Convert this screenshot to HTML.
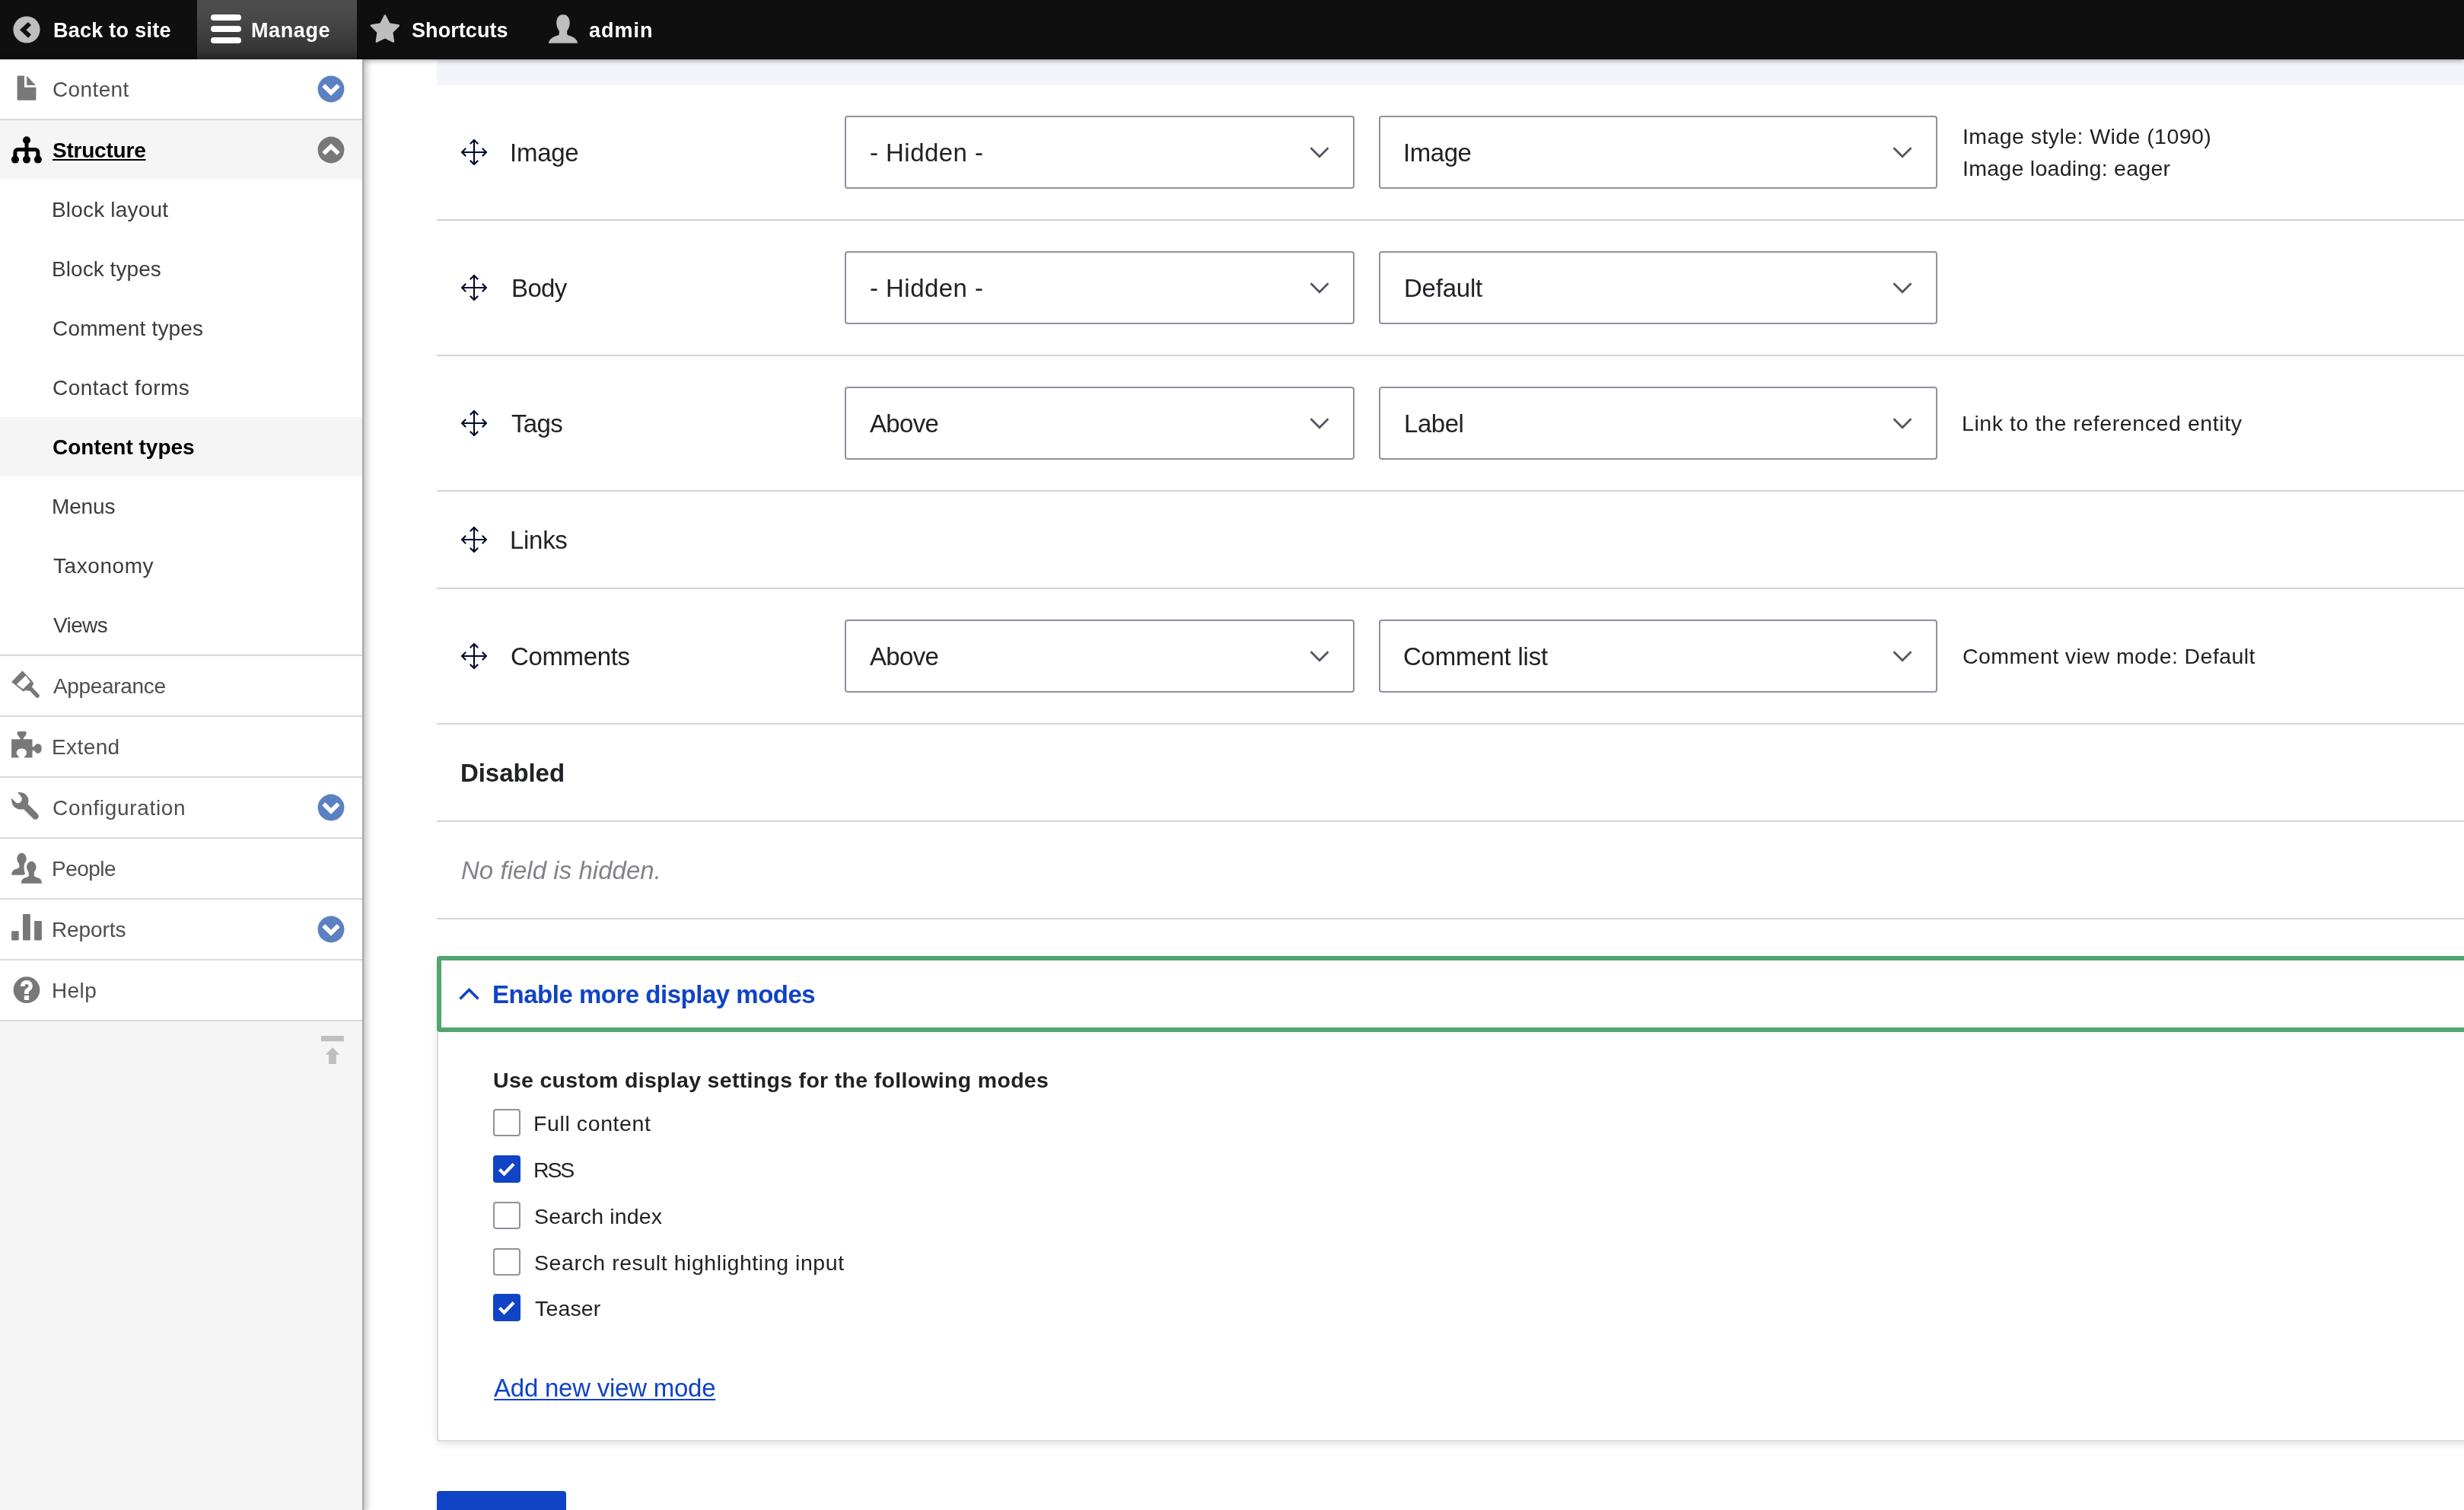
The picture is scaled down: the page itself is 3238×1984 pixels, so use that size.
<!DOCTYPE html><html><head><meta charset="utf-8"><title>Manage display</title><style>
*{margin:0;padding:0;box-sizing:border-box}
html,body{width:3238px;height:1984px;overflow:hidden;background:#fff;font-family:"Liberation Sans",sans-serif}
.t{position:absolute;line-height:1;white-space:nowrap;will-change:transform}
.a{position:absolute}
svg{position:absolute;overflow:visible}
.tb{background:#0f0f0f;left:0;top:0;width:3238px;height:78px;position:absolute;box-shadow:-2px 0 6px 2px rgba(0,0,0,.3333);z-index:5}
.tbt{color:#fff;font-weight:700}
.side{position:absolute;left:0;top:78px;width:478px;height:1906px;background:#fff;border-right:2px solid #a8a8a8;box-shadow:-2px 0 10px 4px rgba(0,0,0,.3333);z-index:6}
.sb{position:absolute;left:0;width:476px;height:2px;background:#d9d9d9}
.st{color:#4e4e4e}
.ss{color:#3c3c3c}
.main{position:absolute;left:0;top:0}
.rb{position:absolute;left:574px;width:2664px;height:2px;background:#d3d4d9}
.fl{color:#212227}
.sel{position:absolute;height:96px;border:2px solid #8e929c;border-radius:4px;background:#fff}
.cb{position:absolute;width:36px;height:36px;border:2px solid #8e929c;border-radius:4px;background:#fff}
.cbc{background:#1043c6;border-color:#1043c6}
</style></head><body>
<div class="a" style="left:574px;top:78px;width:2664px;height:34px;background:#f3f4f9"></div>
<div class="rb" style="top:288px"></div>
<svg style="left:603px;top:180.0px" width="40" height="40" viewBox="-20 -20 40 40"><g fill="none" stroke="#030d2e" stroke-width="2.2" stroke-linecap="round" stroke-linejoin="round"><path d="M0 -15.9V15.9M-15.9 0H15.9"/><path d="M-4.6 -11.5L0 -15.9L4.6 -11.5M-4.6 11.5L0 15.9L4.6 11.5M-11.5 -4.6L-15.9 0L-11.5 4.6M11.5 -4.6L15.9 0L11.5 4.6"/></g></svg>
<div class="t fl" style="left:670.25px;top:184.07px;font-size:33px;;letter-spacing:-0.260px">Image</div>
<div class="sel" style="left:1110px;top:152.0px;width:670px"></div>
<div class="t fl" style="left:1142.70px;top:184.07px;font-size:33px;;letter-spacing:0.458px">- Hidden -</div>
<svg style="left:1720px;top:186.0px" width="28" height="28" viewBox="-14 -14 28 28"><path d="M-11.5 -5.8L0 5.7L11.5 -5.8" fill="none" stroke="#545560" stroke-width="2.8"/></svg>
<div class="sel" style="left:1812px;top:152.0px;width:734px"></div>
<div class="t fl" style="left:1843.60px;top:184.07px;font-size:33px;;letter-spacing:-0.450px">Image</div>
<svg style="left:2486px;top:186.0px" width="28" height="28" viewBox="-14 -14 28 28"><path d="M-11.5 -5.8L0 5.7L11.5 -5.8" fill="none" stroke="#545560" stroke-width="2.8"/></svg>
<div class="t fl" style="left:2578.70px;top:164.87px;font-size:28.5px;;letter-spacing:0.432px">Image style: Wide (1090)</div>
<div class="t fl" style="left:2578.70px;top:206.87px;font-size:28.5px;;letter-spacing:0.280px">Image loading: eager</div>
<div class="rb" style="top:466px"></div>
<svg style="left:603px;top:358.0px" width="40" height="40" viewBox="-20 -20 40 40"><g fill="none" stroke="#030d2e" stroke-width="2.2" stroke-linecap="round" stroke-linejoin="round"><path d="M0 -15.9V15.9M-15.9 0H15.9"/><path d="M-4.6 -11.5L0 -15.9L4.6 -11.5M-4.6 11.5L0 15.9L4.6 11.5M-11.5 -4.6L-15.9 0L-11.5 4.6M11.5 -4.6L15.9 0L11.5 4.6"/></g></svg>
<div class="t fl" style="left:671.90px;top:362.07px;font-size:33px;;letter-spacing:-0.634px">Body</div>
<div class="sel" style="left:1110px;top:330.0px;width:670px"></div>
<div class="t fl" style="left:1142.70px;top:362.07px;font-size:33px;;letter-spacing:0.458px">- Hidden -</div>
<svg style="left:1720px;top:364.0px" width="28" height="28" viewBox="-14 -14 28 28"><path d="M-11.5 -5.8L0 5.7L11.5 -5.8" fill="none" stroke="#545560" stroke-width="2.8"/></svg>
<div class="sel" style="left:1812px;top:330.0px;width:734px"></div>
<div class="t fl" style="left:1844.60px;top:362.07px;font-size:33px;;letter-spacing:-0.217px">Default</div>
<svg style="left:2486px;top:364.0px" width="28" height="28" viewBox="-14 -14 28 28"><path d="M-11.5 -5.8L0 5.7L11.5 -5.8" fill="none" stroke="#545560" stroke-width="2.8"/></svg>
<div class="rb" style="top:644px"></div>
<svg style="left:603px;top:536.0px" width="40" height="40" viewBox="-20 -20 40 40"><g fill="none" stroke="#030d2e" stroke-width="2.2" stroke-linecap="round" stroke-linejoin="round"><path d="M0 -15.9V15.9M-15.9 0H15.9"/><path d="M-4.6 -11.5L0 -15.9L4.6 -11.5M-4.6 11.5L0 15.9L4.6 11.5M-11.5 -4.6L-15.9 0L-11.5 4.6M11.5 -4.6L15.9 0L11.5 4.6"/></g></svg>
<div class="t fl" style="left:672.40px;top:540.07px;font-size:33px;;letter-spacing:-0.664px">Tags</div>
<div class="sel" style="left:1110px;top:508.0px;width:670px"></div>
<div class="t fl" style="left:1143.20px;top:540.07px;font-size:33px;;letter-spacing:-0.650px">Above</div>
<svg style="left:1720px;top:542.0px" width="28" height="28" viewBox="-14 -14 28 28"><path d="M-11.5 -5.8L0 5.7L11.5 -5.8" fill="none" stroke="#545560" stroke-width="2.8"/></svg>
<div class="sel" style="left:1812px;top:508.0px;width:734px"></div>
<div class="t fl" style="left:1844.60px;top:540.07px;font-size:33px;;letter-spacing:-0.450px">Label</div>
<svg style="left:2486px;top:542.0px" width="28" height="28" viewBox="-14 -14 28 28"><path d="M-11.5 -5.8L0 5.7L11.5 -5.8" fill="none" stroke="#545560" stroke-width="2.8"/></svg>
<div class="t fl" style="left:2577.90px;top:541.87px;font-size:28.5px;;letter-spacing:0.579px">Link to the referenced entity</div>
<div class="rb" style="top:772px"></div>
<svg style="left:603px;top:689.0px" width="40" height="40" viewBox="-20 -20 40 40"><g fill="none" stroke="#030d2e" stroke-width="2.2" stroke-linecap="round" stroke-linejoin="round"><path d="M0 -15.9V15.9M-15.9 0H15.9"/><path d="M-4.6 -11.5L0 -15.9L4.6 -11.5M-4.6 11.5L0 15.9L4.6 11.5M-11.5 -4.6L-15.9 0L-11.5 4.6M11.5 -4.6L15.9 0L11.5 4.6"/></g></svg>
<div class="t fl" style="left:670.40px;top:693.07px;font-size:33px;;letter-spacing:-0.300px">Links</div>
<div class="rb" style="top:950px"></div>
<svg style="left:603px;top:842.0px" width="40" height="40" viewBox="-20 -20 40 40"><g fill="none" stroke="#030d2e" stroke-width="2.2" stroke-linecap="round" stroke-linejoin="round"><path d="M0 -15.9V15.9M-15.9 0H15.9"/><path d="M-4.6 -11.5L0 -15.9L4.6 -11.5M-4.6 11.5L0 15.9L4.6 11.5M-11.5 -4.6L-15.9 0L-11.5 4.6M11.5 -4.6L15.9 0L11.5 4.6"/></g></svg>
<div class="t fl" style="left:671.40px;top:846.07px;font-size:33px;;letter-spacing:-0.356px">Comments</div>
<div class="sel" style="left:1110px;top:814.0px;width:670px"></div>
<div class="t fl" style="left:1143.20px;top:846.07px;font-size:33px;;letter-spacing:-0.650px">Above</div>
<svg style="left:1720px;top:848.0px" width="28" height="28" viewBox="-14 -14 28 28"><path d="M-11.5 -5.8L0 5.7L11.5 -5.8" fill="none" stroke="#545560" stroke-width="2.8"/></svg>
<div class="sel" style="left:1812px;top:814.0px;width:734px"></div>
<div class="t fl" style="left:1844.40px;top:846.07px;font-size:33px;;letter-spacing:-0.215px">Comment list</div>
<svg style="left:2486px;top:848.0px" width="28" height="28" viewBox="-14 -14 28 28"><path d="M-11.5 -5.8L0 5.7L11.5 -5.8" fill="none" stroke="#545560" stroke-width="2.8"/></svg>
<div class="t fl" style="left:2579.00px;top:847.87px;font-size:28.5px;;letter-spacing:0.426px">Comment view mode: Default</div>
<div class="t fl" style="left:605.00px;top:999.07px;font-size:33px;font-weight:700;letter-spacing:-0.071px">Disabled</div>
<div class="rb" style="top:1078px"></div>
<div class="t " style="left:606.00px;top:1127.07px;font-size:33px;font-style:italic;color:#82828c;letter-spacing:0.028px">No field is hidden.</div>
<div class="rb" style="top:1206px"></div>
<div class="a" style="left:574px;top:1256px;width:2700px;height:638px;background:#fff;border:2px solid #dcdce2;border-radius:4px;box-shadow:0 4px 10px rgba(0,0,0,.1)"></div>
<div class="a" style="left:574px;top:1256px;width:2700px;height:100px;border:6px solid #52a570;border-radius:4px"></div>
<svg style="left:600px;top:1292px" width="34" height="28" viewBox="0 0 34 28"><path d="M4.5 20.5L16.5 8.5L28.5 20.5" fill="none" stroke="#1043c6" stroke-width="3.6"/></svg>
<div class="t " style="left:647.25px;top:1290.07px;font-size:33px;font-weight:700;color:#1043c6;letter-spacing:-0.491px">Enable more display modes</div>
<div class="t fl" style="left:648.00px;top:1405.37px;font-size:28.5px;font-weight:700;letter-spacing:0.314px">Use custom display settings for the following modes</div>
<div class="cb" style="left:648px;top:1457px"></div>
<div class="t fl" style="left:701.00px;top:1462.37px;font-size:28.5px;;letter-spacing:0.600px">Full content</div>
<div class="cb cbc" style="left:648px;top:1518px"></div><svg style="left:648px;top:1518px" width="36" height="36" viewBox="0 0 36 36"><path d="M8.5 18.5L14.5 24.5L27 11.5" fill="none" stroke="#fff" stroke-width="4.2"/></svg>
<div class="t fl" style="left:701.00px;top:1523.37px;font-size:28.5px;;letter-spacing:-2.150px">RSS</div>
<div class="cb" style="left:648px;top:1579px"></div>
<div class="t fl" style="left:702.00px;top:1584.37px;font-size:28.5px;;letter-spacing:0.145px">Search index</div>
<div class="cb" style="left:648px;top:1640px"></div>
<div class="t fl" style="left:702.00px;top:1645.37px;font-size:28.5px;;letter-spacing:0.559px">Search result highlighting input</div>
<div class="cb cbc" style="left:648px;top:1700px"></div><svg style="left:648px;top:1700px" width="36" height="36" viewBox="0 0 36 36"><path d="M8.5 18.5L14.5 24.5L27 11.5" fill="none" stroke="#fff" stroke-width="4.2"/></svg>
<div class="t fl" style="left:703.00px;top:1705.37px;font-size:28.5px;;letter-spacing:0.150px">Teaser</div>
<div class="t " style="left:648.75px;top:1807.07px;font-size:33px;color:#1043c6;text-decoration:underline;text-decoration-thickness:2px;text-underline-offset:3px;;letter-spacing:-0.238px">Add new view mode</div>
<div class="a" style="left:574px;top:1959px;width:170px;height:60px;background:#1043c6;border-radius:4px"></div>
<div class="tb">
<div class="a" style="left:259px;top:0;width:210px;height:78px;background:linear-gradient(rgba(255,255,255,.25) 20%,rgba(255,255,255,0) 200%)"></div>
<svg style="left:17px;top:21px" width="36" height="36" viewBox="0 0 36 36"><circle cx="18" cy="18" r="17.6" fill="#bebebe"/><path d="M22 10L13.2 18.3L22 26.6" fill="none" stroke="#0f0f0f" stroke-width="5.8"/></svg>
<div class="t tbt" style="left:70.10px;top:27.14px;font-size:27px;;letter-spacing:0.263px">Back to site</div>
<div class="a" style="left:277px;top:19px;width:40px;height:8px;border-radius:4px;background:#fff"></div>
<div class="a" style="left:277px;top:34px;width:40px;height:8px;border-radius:4px;background:#fff"></div>
<div class="a" style="left:277px;top:49px;width:40px;height:8px;border-radius:4px;background:#fff"></div>
<div class="t tbt" style="left:330.40px;top:27.14px;font-size:27px;;letter-spacing:0.620px">Manage</div>
<svg style="left:0;top:0" width="3238" height="78" viewBox="0 0 3238 78"><polygon points="505.90,20.60 511.60,31.55 523.78,33.59 515.13,42.40 516.95,54.61 505.90,49.10 494.85,54.61 496.67,42.40 488.02,33.59 500.20,31.55" fill="#bebebe" stroke="#bebebe" stroke-width="2.5" stroke-linejoin="round"/><path d="M740 19c-5 0-8.8 4.4-8.8 10.8 0 4.6 1.8 8.4 3.6 10.8v3.6c0 1.2-0.8 2-2 2.4-5 1.6-9 3.4-11 7.2-0.5 1-0.8 1.9-0.9 2.9h38.2c-0.1-1-0.4-1.9-0.9-2.9-2-3.8-6-5.6-11-7.2-1.2-0.4-2-1.2-2-2.4v-3.6c1.8-2.4 3.6-6.2 3.6-10.8 0-6.4-3.8-10.8-8.8-10.8z" fill="#bebebe"/></svg>
<div class="t tbt" style="left:540.50px;top:27.14px;font-size:27px;;letter-spacing:0.062px">Shortcuts</div>
<div class="t tbt" style="left:773.50px;top:27.14px;font-size:27px;;letter-spacing:0.975px">admin</div>
</div>
<div class="side">
<div class="a" style="left:0;top:80px;width:476px;height:78px;background:#f5f5f5"></div>
<div class="a" style="left:0;top:470px;width:476px;height:78px;background:#f5f5f5"></div>
<div class="a" style="left:0;top:1264px;width:476px;height:700px;background:#f5f5f5"></div>
<div class="sb" style="top:78px"></div>
<div class="sb" style="top:782px"></div>
<div class="sb" style="top:862px"></div>
<div class="sb" style="top:942px"></div>
<div class="sb" style="top:1022px"></div>
<div class="sb" style="top:1102px"></div>
<div class="sb" style="top:1182px"></div>
<div class="sb" style="top:1262px"></div>
<div class="t st" style="left:69.00px;top:25.80px;font-size:28px;;letter-spacing:0.377px">Content</div>
<div class="t " style="left:69.00px;top:105.80px;font-size:28px;font-weight:700;color:#000;text-decoration:underline;text-decoration-thickness:2px;text-underline-offset:2px;letter-spacing:-0.221px">Structure</div>
<div class="t ss" style="left:67.80px;top:183.90px;font-size:28px;;letter-spacing:0.182px">Block layout</div>
<div class="t ss" style="left:67.80px;top:261.90px;font-size:28px;;letter-spacing:0.060px">Block types</div>
<div class="t ss" style="left:68.80px;top:339.90px;font-size:28px;;letter-spacing:0.167px">Comment types</div>
<div class="t ss" style="left:68.80px;top:417.90px;font-size:28px;;letter-spacing:0.459px">Contact forms</div>
<div class="t " style="left:68.80px;top:495.90px;font-size:28px;font-weight:700;color:#000;letter-spacing:0.000px">Content types</div>
<div class="t ss" style="left:67.80px;top:573.90px;font-size:28px;;letter-spacing:-0.150px">Menus</div>
<div class="t ss" style="left:70.00px;top:651.90px;font-size:28px;;letter-spacing:0.571px">Taxonomy</div>
<div class="t ss" style="left:70.00px;top:729.90px;font-size:28px;;letter-spacing:-0.625px">Views</div>
<div class="t st" style="left:70.00px;top:809.80px;font-size:28px;;letter-spacing:-0.333px">Appearance</div>
<div class="t st" style="left:68.00px;top:889.80px;font-size:28px;;letter-spacing:0.400px">Extend</div>
<div class="t st" style="left:69.00px;top:969.80px;font-size:28px;;letter-spacing:0.677px">Configuration</div>
<div class="t st" style="left:68.00px;top:1049.80px;font-size:28px;;letter-spacing:-0.540px">People</div>
<div class="t st" style="left:68.00px;top:1129.80px;font-size:28px;;letter-spacing:-0.102px">Reports</div>
<div class="t st" style="left:68.00px;top:1209.80px;font-size:28px;;letter-spacing:0.399px">Help</div>
<svg style="left:417px;top:20.75px" width="36" height="36" viewBox="-18 -18 36 36"><circle r="17.4" fill="#5b81c3"/><path d="M-9.7 -4.7L0 4.8L9.7 -4.7" fill="none" stroke="#fff" stroke-width="5.6"/></svg>
<svg style="left:417px;top:101px" width="36" height="36" viewBox="-18 -18 36 36"><circle r="17.4" fill="#787878"/><path d="M-9.7 4.8L0 -4.7L9.7 4.8" fill="none" stroke="#fff" stroke-width="5.6"/></svg>
<svg style="left:417px;top:965px" width="36" height="36" viewBox="-18 -18 36 36"><circle r="17.4" fill="#5b81c3"/><path d="M-9.7 -4.7L0 4.8L9.7 -4.7" fill="none" stroke="#fff" stroke-width="5.6"/></svg>
<svg style="left:417px;top:1124.6px" width="36" height="36" viewBox="-18 -18 36 36"><circle r="17.4" fill="#5b81c3"/><path d="M-9.7 -4.7L0 4.8L9.7 -4.7" fill="none" stroke="#fff" stroke-width="5.6"/></svg>
<svg style="left:0;top:-78px" width="478" height="1984" viewBox="0 0 478 1984"><path d="M22.6 100.5q0-1 1-1H32v15.3h15.4V130.7q0 1-1 1H23.6q-1 0-1-1z" fill="#787878"/><path d="M35.2 99.8V111.9H46.9z" fill="#787878"/><g fill="#000"><circle cx="35" cy="184.3" r="5"/><circle cx="19.9" cy="209.6" r="5"/><circle cx="35" cy="209.6" r="5"/><circle cx="49.9" cy="209.6" r="5"/><path d="M35 184V210M19.9 209V200a3.5 3.5 0 0 1 3.5-3.5H46.4a3.5 3.5 0 0 1 3.5 3.5V209" fill="none" stroke="#000" stroke-width="5"/></g><g fill="#787878"><path d="M29.5 881.3L15.1 895.9L30.5 908.6L36 906 L42.6 895.2z M33.7 887.8L21.8 899.3L30.4 905.6L40 895.9z" fill-rule="evenodd"/><path d="M39.5 904L49 914.2" stroke="#787878" stroke-width="5.5" stroke-linecap="round"/><path d="M30 906L41.5 894.5L44.5 898L38.5 908z"/></g><path fill="#787878" fill-rule="evenodd" d="M15.1 971.2H26.6C27 969.8 25.5 968.5 23.8 966.5C22 964.5 22.3 961.1 24.3 961.1H33C35 961.1 35.3 964.5 33.5 966.5C31.8 968.5 30.3 969.8 30.7 971.2H42.5V980.5C43.5 982 44.5 981.5 46 979.5C47.5 977.5 48.5 977.2 50 977.2C53 977.2 54.7 980 54.7 983.5C54.7 987 53 989.8 50 989.8C48.5 989.8 47.5 989.5 46 987.5C44.5 985.5 43.5 985 42.5 986.5V995.6H32.3C31.2 994.5 33.5 993 34.5 991.5C35.8 989.5 35.2 983.5 28.4 983.5C21.6 983.5 21 989.5 22.3 991.5C23.3 993 25.6 994.5 24.5 995.6H15.1z"/><g fill="#787878"><path d="M33.5 1059.5L46.5 1072.5" stroke="#787878" stroke-width="8.5" stroke-linecap="round"/><path d="M23.2 1041.3C29.5 1039.5 36.5 1043.8 37.4 1050.5C37.9 1054.2 36.8 1057.3 34.5 1059.7L31.2 1063C28.5 1063.8 25 1063.8 22.3 1062.6C17 1060.3 14.5 1054.5 15.2 1048.8L21.5 1055C23.5 1055.8 26.2 1055 27.8 1053C28.8 1051.5 29 1049.2 28.2 1047.3z"/></g><g fill="#787878"><ellipse cx="28.5" cy="1128.3" rx="6.2" ry="7.6"/><path d="M25 1134H32L31.5 1140.5C31.8 1143.5 32.5 1146.5 33 1148.5L30.5 1149.8H15.2C15.2 1146 16.5 1143.5 20.5 1142C22.8 1141.2 24.8 1140.5 25.5 1139.5z"/><ellipse cx="41.3" cy="1139.3" rx="6.3" ry="7.6"/><path d="M37.5 1145H45L44.8 1150.5C45.5 1152 48 1152.8 50.5 1153.6C53.5 1154.6 54.9 1157 54.9 1160.7H27.9C27.9 1157 29.3 1154.6 32.3 1153.6C34.8 1152.8 37.3 1152 38 1150.5z"/></g><g fill="#787878"><rect x="15.1" y="1223.2" width="9.6" height="12.4" rx="1"/><rect x="30" y="1201.1" width="9.8" height="34.5" rx="1"/><rect x="45.1" y="1209.9" width="9.8" height="25.7" rx="1"/></g><circle cx="35" cy="1300.7" r="17.4" fill="#787878"/><path fill="#fff" d="M26.9 1296C26.9 1291.3 30.5 1288.1 35 1288.1C39.5 1288.1 42.8 1291.5 42.8 1295.6C42.8 1299.2 40.5 1301.2 38.8 1302.3C38 1302.9 37.8 1303.3 37.8 1304V1306.1H31.9V1304.5C31.9 1301.5 33.2 1299.8 35.2 1298.5C36.4 1297.7 37.6 1297 37.6 1295.6C37.6 1294.1 36.4 1293 35 1293C33.6 1293 32.5 1294.2 32.5 1296z"/><rect x="31.8" y="1308" width="6.3" height="6" rx="0.8" fill="#fff"/><g fill="#bfbfbf"><rect x="421.9" y="1360.9" width="30" height="7.3"/><path d="M437 1376.2L427.6 1385.8H432V1398H441.8V1385.8H446.3z"/></g></svg>
</div>
</body></html>
